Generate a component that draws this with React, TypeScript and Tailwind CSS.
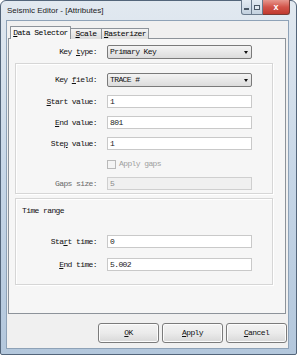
import React from 'react'

const mono = "font-['Liberation_Mono','DejaVu_Sans_Mono',monospace] text-[8px] tracking-[-0.6px]"

function U({ children }: { children: React.ReactNode }) {
  return <span className="underline underline-offset-[1px]">{children}</span>
}

function Select({ value }: { value: string }) {
  return (
    <div className="w-[145px] h-[14px] border border-[#7a7a7a] rounded-[2px] bg-gradient-to-b from-[#f4f4f4] to-[#dcdcdc] flex items-center justify-between pl-[2px] pr-[3px]">
      <span className="text-[#111]">{value}</span>
      <span className="w-0 h-0 border-l-[2.5px] border-r-[2.5px] border-t-[3px] border-l-transparent border-r-transparent border-t-[#111]" />
    </div>
  )
}

function Input({ value, disabled }: { value: string; disabled?: boolean }) {
  return (
    <div
      className={
        'w-[145px] h-[13px] border flex items-center pl-[2px] ' +
        (disabled ? 'bg-[#f0f0f0] border-[#cfcfcf] text-[#8a8a8a]' : 'bg-white border-[#c9c9c9] text-[#1a1a1a]')
      }
    >
      {value}
    </div>
  )
}

function Row({ label, labelW, children, gray }: { label: React.ReactNode; labelW: string; children: React.ReactNode; gray?: boolean }) {
  return (
    <div className="flex items-center">
      <div className={labelW + ' text-right ' + (gray ? 'text-[#6a6a6a]' : 'text-[#111]')}>{label}</div>
      <div className="ml-[10px]">{children}</div>
    </div>
  )
}

function Btn({ children }: { children: React.ReactNode }) {
  return (
    <div className="w-[61px] h-[20px] rounded-[3px] border border-[#7b7b7b] bg-gradient-to-b from-[#f3f3f3] via-[#ebebeb] to-[#d8d8d8] shadow-[inset_0_0_0_1px_#fcfcfc] flex items-center justify-center text-[#111]">
      {children}
    </div>
  )
}

export default function App() {
  return (
    <div className={'w-[299px] h-[358px] bg-white ' + mono}>
      <div className="w-[297px] h-[355px] rounded-t-[6px] rounded-b-[2px] border border-[#53657a] bg-gradient-to-b from-[#e2e9f0] via-[#c6d6e7] to-[#b3c7dc] flex flex-col pl-[5px] pr-[7px] pb-[5px]">
        {/* title bar */}
        <div className="h-[19px] flex justify-between items-start">
          <div className="pt-[4px] pl-[1px] font-['Liberation_Sans',Arial,sans-serif] text-[8px] tracking-normal text-[#222]">
            Seismic Editor - [Attributes]
          </div>
          <div className="flex -mt-[1px] mr-[-1px]">
            <div className="w-[11px] h-[15px] border border-[#6a7a8c] border-t-0 rounded-bl-[3px] bg-gradient-to-b from-[#e4ebf2] to-[#c3d1df] flex items-end justify-center pb-[4px]">
              <div className="w-[5px] h-[2px] bg-white border border-[#4b5866]" />
            </div>
            <div className="w-[11px] h-[15px] border border-l-0 border-[#6a7a8c] border-t-0 bg-gradient-to-b from-[#e4ebf2] to-[#c3d1df] flex items-center justify-center">
              <div className="w-[6px] h-[5px] border border-[#4b5866] bg-[#dfe7ef]" />
            </div>
            <div className="w-[27px] h-[15px] border border-l-0 border-[#7a3a33] border-t-0 rounded-br-[3px] bg-gradient-to-b from-[#e6968d] via-[#d2544a] to-[#c1392e] flex items-center justify-center">
              <span className="font-['Liberation_Sans',Arial,sans-serif] font-bold text-[9px] leading-none text-white tracking-normal">x</span>
            </div>
          </div>
        </div>

        {/* client area */}
        <div className="flex-1 bg-[#f0f0f0] border border-[#8ea2b7] flex flex-col pt-[5px] px-[1px]">
          {/* tabs */}
          <div className="flex items-end h-[13px] pl-[2px] relative z-10">
            <div className="h-[13px] w-[61px] border border-b-0 border-[#8d939a] bg-[#f6f6f6] flex items-center justify-center rounded-t-[1px]">
              <span><U>D</U>ata Selector</span>
            </div>
            <div className="h-[11px] w-[31px] border border-l-0 border-b-0 border-[#8d939a] bg-gradient-to-b from-[#f3f3f3] to-[#dcdcdc] flex items-center justify-center">
              <span><U>S</U>cale</span>
            </div>
            <div className="h-[11px] w-[47px] border border-l-0 border-b-0 border-[#8d939a] bg-gradient-to-b from-[#f3f3f3] to-[#dcdcdc] flex items-center justify-center">
              <span><U>R</U>asterizer</span>
            </div>
          </div>

          {/* tab panel */}
          <div className="w-[278px] h-[276px] -mt-[1px] border border-[#8d939a] bg-[#f6f6f6] flex flex-col pt-[6px]">
            <Row label={<span>Key <U>t</U>ype:</span>} labelW="w-[88px]">
              <Select value="Primary Key" />
            </Row>

            {/* group 1 */}
            <div className="mt-[4px] ml-[6px] w-[258px] h-[131px] border border-[#d6d6d6] shadow-[inset_1px_1px_0_#ffffff,1px_1px_0_#ffffff] flex flex-col pt-[9px] gap-[8px]">
              <Row label={<span>Key <U>f</U>ield:</span>} labelW="w-[81px]">
                <Select value="TRACE #" />
              </Row>
              <Row label={<span><U>S</U>tart value:</span>} labelW="w-[81px]">
                <Input value="1" />
              </Row>
              <Row label={<span><U>E</U>nd value:</span>} labelW="w-[81px]">
                <Input value="801" />
              </Row>
              <Row label={<span>Ste<U>p</U> value:</span>} labelW="w-[81px]">
                <Input value="1" />
              </Row>
              <Row label="" labelW="w-[81px]">
                <div className="flex items-center gap-[3px] text-[#a0a0a0]">
                  <div className="w-[9px] h-[9px] border border-[#b9b9b9] bg-[#f4f4f4]" />
                  <span>Apply gaps</span>
                </div>
              </Row>
              <div className="-mt-[1px]">
                <Row label="Gaps size:" labelW="w-[81px]" gray>
                  <Input value="5" disabled />
                </Row>
              </div>
            </div>

            {/* group 2 */}
            <div className="mt-[4px] ml-[6px] w-[258px] h-[87px] border border-[#d6d6d6] shadow-[inset_1px_1px_0_#ffffff,1px_1px_0_#ffffff] flex flex-col">
              <div className="pt-[6px] pl-[6px] h-[16px] text-[#111]">Time range</div>
              <div className="flex flex-col gap-[10px] pt-[20px]">
                <Row label={<span>Sta<U>r</U>t time:</span>} labelW="w-[81px]">
                  <Input value="0" />
                </Row>
                <Row label={<span><U>E</U>nd time:</span>} labelW="w-[81px]">
                  <Input value="5.002" />
                </Row>
              </div>
            </div>
          </div>

          {/* buttons */}
          <div className="mt-[9px] flex justify-end gap-[3px]">
            <Btn><U>O</U>K</Btn>
            <Btn><U>A</U>pply</Btn>
            <Btn><U>C</U>ancel</Btn>
          </div>
        </div>
      </div>
    </div>
  )
}
